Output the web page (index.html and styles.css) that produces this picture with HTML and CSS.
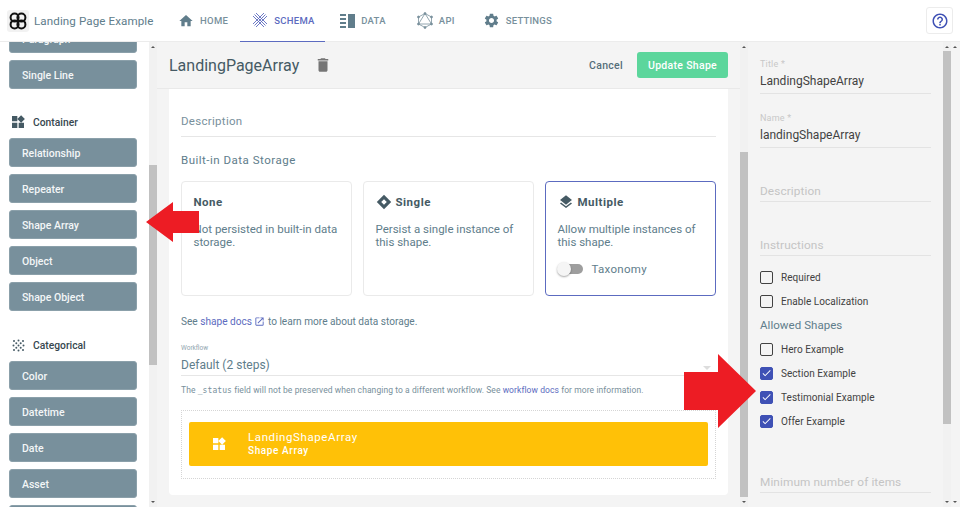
FILE: index.html
```html
<!DOCTYPE html>
<html>
	<head>
		<meta charset="UTF-8">
		<title>Landing Page Example</title>
		<link rel="stylesheet" href="styles.css">
	</head>
	<body>
		<div class="topbar">
			<div class="logo">
				<svg width="18" height="18" viewBox="0 0 18 18" fill="none" stroke="#111" stroke-width="2"><circle cx="5.6" cy="5.6" r="4"/><circle cx="12.4" cy="5.6" r="4"/><circle cx="5.6" cy="12.4" r="4"/><circle cx="12.4" cy="12.4" r="4"/></svg>
			</div>
			<div class="project">Landing Page Example</div>
			<a class="tab tab_home">
				<svg width="16" height="16" viewBox="0 0 24 24" fill="#607d8b"><path d="M10 20v-6h4v6h5v-8h3L12 3 2 12h3v8z"/></svg>
				<span>Home</span>
			</a>
			<a class="tab tab_schema">
				<svg width="16" height="16" viewBox="0 0 16 16" fill="none" stroke="#5c6bc0" stroke-width=".9"><path d="M4 1L15 12M2.500 2.500L13.500 13.500M1 4L12 15M12 1L1 12M13.500 2.500L2.500 13.500M15 4L4 15"/></svg>
				<span>Schema</span>
			</a>
			<a class="tab tab_data">
				<svg width="15" height="15" viewBox="0 0 15 15" fill="#607d8b"><path d="M0 1h6v2H0zM0 5h6v2H0zM0 9h6v2H0zM0 13h6v2H0zM8 1h7v14H8z"/></svg>
				<span>Data</span>
			</a>
			<a class="tab tab_api">
				<svg width="16" height="17" viewBox="0 0 16 17" fill="#78909c" stroke="#78909c" stroke-width=".8"><path fill="none" d="M8 1.500L14.500 5v7L8 15.500 1.500 12V5zM8 1.500L1.500 12h13z"/><circle cx="8" cy="1.500" r="1"/><circle cx="14.500" cy="5" r="1"/><circle cx="14.500" cy="12" r="1"/><circle cx="8" cy="15.500" r="1"/><circle cx="1.500" cy="12" r="1"/><circle cx="1.500" cy="5" r="1"/></svg>
				<span>API</span>
			</a>
			<a class="tab tab_settings">
				<svg width="17" height="17" viewBox="0 0 24 24" fill="#607d8b"><path d="M19.140 12.940c.04-.3.060-.61.060-.94 0-.32-.02-.64-.07-.94l2.030-1.580c.18-.14.230-.41.120-.61l-1.920-3.320c-.12-.22-.37-.29-.59-.22l-2.390.96c-.5-.38-1.030-.7-1.620-.94l-.36-2.540c-.04-.24-.24-.41-.48-.41h-3.840c-.24 0-.43.170-.47.410l-.36 2.540c-.59.240-1.130.570-1.620.94l-2.390-.96c-.22-.08-.47 0-.59.220L2.740 8.870c-.12.210-.08.470.12.610l2.030 1.580c-.05.300-.09.630-.09.940s.02.640.07.940l-2.030 1.580c-.18.140-.23.410-.12.610l1.920 3.320c.12.220.37.290.59.220l2.390-.96c.5.380 1.030.7 1.620.94l.36 2.540c.05.240.24.410.48.410h3.840c.24 0 .44-.17.47-.41l.36-2.540c.59-.24 1.130-.56 1.620-.94l2.390.96c.22.080.47 0 .59-.22l1.920-3.320c.12-.22.070-.47-.12-.61l-2.010-1.580zM12 15.600c-1.980 0-3.600-1.620-3.600-3.600s1.620-3.600 3.600-3.600 3.600 1.620 3.600 3.600-1.620 3.600-3.600 3.600z"/></svg>
				<span>Settings</span>
			</a>
			<div class="help">
				<svg width="18" height="18" viewBox="0 0 24 24" fill="#3f51b5"><path d="M11 18h2v-2h-2v2zm1-16C6.480 2 2 6.480 2 12s4.480 10 10 10 10-4.480 10-10S17.520 2 12 2zm0 18c-4.410 0-8-3.590-8-8s3.590-8 8-8 8 3.590 8 8-3.590 8-8 8zm0-14c-2.210 0-4 1.790-4 4h2c0-1.100.9-2 2-2s2 .9 2 2c0 2-3 1.750-3 5h2c0-2.250 3-2.500 3-5 0-2.210-1.790-4-4-4z"/></svg>
			</div>
		</div>

		<div class="workspace">
			<div class="palette">
				<div class="palette_inner">
					<div class="block">Paragraph</div>
					<div class="block">Single Line</div>
					<div class="group_head group_container">
						<svg width="16" height="16" viewBox="0 0 24 24" fill="#455a64"><path d="M13 13v8h8v-8h-8zM3 21h8v-8H3v8zM3 3v8h8V3H3zm13.660-1.310L11 7.340 16.660 13l5.660-5.660-5.660-5.650z"/></svg>
						<span>Container</span>
					</div>
					<div class="block">Relationship</div>
					<div class="block">Repeater</div>
					<div class="block">Shape Array</div>
					<div class="block">Object</div>
					<div class="block">Shape Object</div>
					<div class="group_head group_categorical">
						<svg width="13" height="13" viewBox="0 0 13 13" fill="#455a64"><circle cx="2" cy="2" r="1"/><circle cx="6.500" cy="1.500" r="1"/><circle cx="11" cy="2" r="1"/><circle cx="4.300" cy="4.300" r="1"/><circle cx="8.700" cy="4.300" r="1"/><circle cx="1.500" cy="6.500" r="1"/><circle cx="6.500" cy="6.500" r="1"/><circle cx="11.500" cy="6.500" r="1"/><circle cx="4.300" cy="8.700" r="1"/><circle cx="8.700" cy="8.700" r="1"/><circle cx="2" cy="11" r="1"/><circle cx="6.500" cy="11.500" r="1"/><circle cx="11" cy="11" r="1"/></svg>
						<span>Categorical</span>
					</div>
					<div class="block">Color</div>
					<div class="block">Datetime</div>
					<div class="block">Date</div>
					<div class="block">Asset</div>
					<div class="block"></div>
				</div>
			</div>
			<div class="bar"><div class="thumb thumb_palette"></div></div>

			<div class="editor">
				<div class="editor_head">
					<div class="shape_title">LandingPageArray</div>
					<svg class="trash" width="18" height="18" viewBox="0 0 24 24" fill="#757575"><path d="M6 19c0 1.100.9 2 2 2h8c1.100 0 2-.9 2-2V7H6v12zM19 4h-3.500l-1-1h-5l-1 1H5v2h14V4z"/></svg>
					<div class="cancel">Cancel</div>
					<div class="update">Update Shape</div>
				</div>
				<div class="sheet">
					<div class="desc_field">Description</div>
					<div class="storage_title">Built-in Data Storage</div>
					<div class="storage">
						<div class="option">
							<div class="option_head">None</div>
							<p>Not persisted in built-in data storage.</p>
						</div>
						<div class="option">
							<div class="option_head">
								<svg width="16" height="16" viewBox="0 0 16 16" fill="#455a64"><path fill-rule="evenodd" d="M8 .8L15.200 8 8 15.200 .8 8zM8 5.200L5.200 8 8 10.800 10.800 8z"/></svg>
								<span>Single</span>
							</div>
							<p>Persist a single instance of this shape.</p>
						</div>
						<div class="option option_on">
							<div class="option_head">
								<svg width="16" height="16" viewBox="0 0 24 24" fill="#455a64"><path d="M11.990 18.540l-7.370-5.730L3 14.070l9 7 9-7-1.630-1.270-7.380 5.740zM12 16l7.360-5.730L21 9l-9-7-9 7 1.630 1.270L12 16z"/></svg>
								<span>Multiple</span>
							</div>
							<p>Allow multiple instances of this shape.</p>
							<div class="taxonomy">
								<div class="switch"><div class="knob"></div></div>
								<span>Taxonomy</span>
							</div>
						</div>
					</div>
					<div class="docs">See <a>shape docs <svg width="11" height="11" viewBox="0 0 24 24" fill="#5c6bc0"><path d="M19 19H5V5h7V3H5c-1.110 0-2 .9-2 2v14c0 1.100.89 2 2 2h14c1.100 0 2-.9 2-2v-7h-2v7zM14 3v2h3.590l-9.830 9.830 1.410 1.410L19 6.410V10h2V3h-7z"/></svg></a> to learn more about data storage.</div>
					<div class="wf_label">Workflow</div>
					<div class="wf_select">Default (2 steps)<i class="caret"></i></div>
					<div class="wf_note">The <code>_status</code> field will not be preserved when changing to a different workflow. See <a>workflow docs</a> for more information.</div>
					<div class="dropzone">
						<div class="shape_item">
							<svg width="16" height="16" viewBox="0 0 24 24" fill="#fff"><path d="M13 13v8h8v-8h-8zM3 21h8v-8H3v8zM3 3v8h8V3H3zm13.660-1.310L11 7.340 16.660 13l5.660-5.660-5.660-5.650z"/></svg>
							<div class="shape_text">
								<div class="shape_name">LandingShapeArray</div>
								<div class="shape_type">Shape Array</div>
							</div>
						</div>
					</div>
				</div>
			</div>
			<div class="bar"><div class="thumb thumb_editor"></div></div>

			<div class="props">
				<div class="field field_title"><label>Title *</label><div>LandingShapeArray</div></div>
				<div class="field field_name"><label>Name *</label><div>landingShapeArray</div></div>
				<div class="field_empty field_desc">Description</div>
				<div class="field_empty field_instr">Instructions</div>
				<div class="check check_first"><i class="box"></i>Required</div>
				<div class="check"><i class="box"></i>Enable Localization</div>
				<div class="allowed">Allowed Shapes</div>
				<div class="check"><i class="box"></i>Hero Example</div>
				<div class="check"><i class="box box_on"><svg width="12" height="12" viewBox="0 0 24 24" fill="#fff"><path d="M9 16.170L4.830 12l-1.420 1.410L9 19 21 7l-1.410-1.410z"/></svg></i>Section Example</div>
				<div class="check"><i class="box box_on"><svg width="12" height="12" viewBox="0 0 24 24" fill="#fff"><path d="M9 16.170L4.830 12l-1.420 1.410L9 19 21 7l-1.410-1.410z"/></svg></i>Testimonial Example</div>
				<div class="check"><i class="box box_on"><svg width="12" height="12" viewBox="0 0 24 24" fill="#fff"><path d="M9 16.170L4.830 12l-1.420 1.410L9 19 21 7l-1.410-1.410z"/></svg></i>Offer Example</div>
				<div class="field_empty field_min">Minimum number of items</div>
			</div>
			<div class="bar"><div class="thumb thumb_props"></div></div>
			<div class="bar bar_outer"></div>
		</div>

		<svg class="arrow arrow_left" width="54" height="40" viewBox="0 0 54 40"><path d="M0 20L27 0V9H53V31H27V40z"/></svg>
		<svg class="arrow arrow_right" width="73" height="74" viewBox="0 0 73 74"><path d="M0 18H34V0L72 37 34 74V56H0z"/></svg>
	</body>
</html>
```

FILE: styles.css
```css
* {
	margin: 0;
	padding: 0;
	box-sizing: border-box;
}
body {
	width: 960px;
	height: 507px;
	overflow: hidden;
	position: relative;
	background: #fff;
	font-family: Roboto, sans-serif;
	color: #455a64;
}
a {
	color: #5c6bc0;
}

/* top bar */
.topbar {
	height: 42px;
	display: flex;
	align-items: center;
	background: #fff;
	border-bottom: 1px solid #ececec;
}
.logo {
	width: 22px;
	height: 22px;
	margin-left: 7px;
	display: flex;
	align-items: center;
	justify-content: center;
	background: #f2f2f2;
	border-radius: 3px;
}
.project {
	margin-left: 5px;
	width: 145px;
	font-size: 11.6px;
	letter-spacing: .1px;
	color: #607d8b;
}
.tab {
	height: 42px;
	display: flex;
	align-items: center;
	gap: 6px;
	font-size: 9.5px;
	font-weight: 500;
	letter-spacing: .3px;
	text-transform: uppercase;
	color: #78909c;
}
.tab_home {
	margin-left: -1px;
}
.tab_schema {
	width: 85px;
	margin-left: 12px;
	padding-left: 12px;
	color: #5c6bc0;
	border-bottom: 1px solid #5c6bc0;
}
.tab_data {
	margin-left: 15px;
}
.tab_api {
	margin-left: 31px;
}
.tab_settings {
	margin-left: 28px;
	letter-spacing: .2px;
}
.help {
	width: 27px;
	height: 27px;
	margin-left: auto;
	margin-right: 7px;
	display: flex;
	align-items: center;
	justify-content: center;
	border: 1px solid #ececec;
	border-radius: 3px;
}

/* main row */
.workspace {
	height: 465px;
	display: flex;
}
.bar {
	width: 8px;
	flex-shrink: 0;
	position: relative;
	background: #f1f1f1;
}
.bar::before,
.bar::after {
	content: "";
	position: absolute;
	left: 2px;
	border-left: 2px solid transparent;
	border-right: 2px solid transparent;
}
.bar::before {
	top: 4px;
	border-bottom: 2px solid #555;
}
.bar::after {
	bottom: 4px;
	border-top: 2px solid #555;
}
.thumb {
	width: 8px;
	background: #c1c1c1;
}
.thumb_palette {
	margin-top: 123px;
	height: 200px;
}
.thumb_editor {
	margin-top: 110px;
	height: 345px;
}
.thumb_props {
	margin-top: 9px;
	height: 373px;
}
.bar_outer {
	width: 9px;
	background: #f4f4f4;
}

/* left palette */
.palette {
	width: 149px;
	flex-shrink: 0;
	overflow: hidden;
	background: #fff;
}
.palette_inner {
	margin-top: -18px;
	padding: 0 12px 0 9px;
}
.block {
	height: 29px;
	margin-bottom: 7px;
	padding: 1px 0 0 12px;
	display: flex;
	align-items: center;
	font-size: 10.5px;
	font-weight: 500;
	color: #f3f6f7;
	background: #78909c;
	border: 1px solid #8ba0aa;
	border-radius: 3px;
}
.group_head {
	height: 16px;
	display: flex;
	align-items: center;
	margin-bottom: 8px;
	font-size: 10.3px;
	font-weight: 500;
	color: #37474f;
}
.group_container {
	margin-top: 25px;
	margin-left: 1px;
	gap: 7px;
}
.group_categorical {
	margin-top: 26px;
	margin-left: 3px;
	gap: 8px;
}

/* middle editor */
.editor {
	width: 583px;
	flex-shrink: 0;
	background: #f4f4f4;
}
.editor_head {
	height: 47px;
	padding: 0 12px;
	display: flex;
	align-items: center;
	border-bottom: 1px solid #e9e9e9;
}
.shape_title {
	font-size: 16px;
	color: #455a64;
}
.trash {
	margin-left: 15px;
}
.cancel {
	margin-left: auto;
	font-size: 10.5px;
	font-weight: 500;
	letter-spacing: .3px;
	color: #546e7a;
}
.update {
	width: 91px;
	height: 26px;
	margin-left: 14px;
	display: flex;
	align-items: center;
	justify-content: center;
	font-size: 10.5px;
	font-weight: 500;
	letter-spacing: .3px;
	color: #fff;
	background: #5cd69c;
	border-radius: 3px;
}
.sheet {
	height: 406px;
	margin: 0 12px;
	padding: 0 12px;
	background: #fff;
	border-radius: 0 0 4px 4px;
}
.desc_field {
	height: 48px;
	padding-top: 25px;
	font-size: 11.5px;
	letter-spacing: .3px;
	color: #78909c;
	border-bottom: 1px solid #e6e6e6;
}
.storage_title {
	margin-top: 16px;
	font-size: 11.5px;
	letter-spacing: .5px;
	color: #607d8b;
}
.storage {
	margin-top: 14px;
	display: flex;
	gap: 11px;
}
.option {
	width: 171px;
	height: 115px;
	padding: 12px 11.5px;
	border: 1px solid #eaeaea;
	border-radius: 4px;
}
.option_on {
	border-color: #5c6bc0;
}
.option_head {
	height: 16px;
	display: flex;
	align-items: center;
	gap: 4px;
	font-size: 11.5px;
	font-weight: 700;
	letter-spacing: .5px;
	color: #455a64;
}
.option p {
	margin-top: 13px;
	font-size: 11.5px;
	line-height: 13px;
	color: #607d8b;
}
.taxonomy {
	margin-top: 13px;
	display: flex;
	align-items: center;
	gap: 9px;
	font-size: 11.500px;
	letter-spacing: .3px;
	color: #607d8b;
}
.switch {
	width: 25px;
	height: 10px;
	border-radius: 5px;
	background: #9e9e9e;
	position: relative;
}
.knob {
	position: absolute;
	left: -1px;
	top: -2px;
	width: 14px;
	height: 14px;
	border-radius: 50%;
	background: #f5f5f5;
	box-shadow: 0 1px 2px rgba(0,0,0,.35);
}
.docs {
	margin-top: 20px;
	font-size: 10.1px;
	color: #607d8b;
}
.docs svg {
	vertical-align: -2px;
}
.wf_label {
	margin-top: 17px;
	font-size: 6.5px;
	color: #90a4ae;
}
.wf_select {
	height: 24px;
	padding-top: 6px;
	font-size: 12px;
	color: #607d8b;
	border-bottom: 1px solid #e6e6e6;
	position: relative;
}
.caret {
	position: absolute;
	right: 5px;
	top: 14px;
	border-left: 4px solid transparent;
	border-right: 4px solid transparent;
	border-top: 4px solid #ddd;
}
.wf_note {
	margin-top: 9px;
	font-size: 8.5px;
	letter-spacing: .08px;
	color: #78909c;
}
.wf_note code {
	font-family: "DejaVu Sans Mono", monospace;
	font-size: 8px;
}
.dropzone {
	height: 69px;
	margin-top: 15px;
	padding: 11px 7px;
	border: 1px dotted #d5d5d5;
}
.shape_item {
	height: 44px;
	padding-left: 22px;
	display: flex;
	align-items: center;
	gap: 21px;
	color: #fff;
	background: #ffc107;
	border-radius: 2px;
}
.shape_name {
	font-size: 11.5px;
	letter-spacing: .6px;
	line-height: 14px;
}
.shape_type {
	font-size: 10px;
	font-weight: 500;
	letter-spacing: .6px;
	line-height: 14px;
}

/* right properties */
.props {
	flex: 1;
	padding: 17px 12px 0;
	background: #f4f4f4;
	color: #424242;
}
.field label {
	display: block;
	height: 11px;
	font-size: 9px;
	line-height: 11px;
	letter-spacing: .2px;
	color: #c8c8c8;
}
.field div {
	height: 24px;
	padding-top: 4px;
	font-size: 12px;
	border-bottom: 1px solid #e3e3e3;
}
.field_name {
	margin-top: 19px;
}
.field_empty {
	height: 17px;
	font-size: 11.8px;
	line-height: 12px;
	letter-spacing: .1px;
	color: #c4c4c4;
	border-bottom: 1px solid #e3e3e3;
}
.field_desc {
	margin-top: 37px;
}
.field_instr {
	margin-top: 37px;
}
.check {
	height: 24px;
	display: flex;
	align-items: center;
	gap: 8px;
	font-size: 10px;
	letter-spacing: .05px;
}
.check_first {
	margin-top: 9px;
}
.box {
	width: 13px;
	height: 13px;
	display: flex;
	align-items: center;
	justify-content: center;
	border: 1.500px solid #424242;
	border-radius: 2px;
}
.box_on {
	background: #3f51b5;
	border-color: #3f51b5;
}
.allowed {
	height: 24px;
	line-height: 24px;
	font-size: 11.500px;
	letter-spacing: .05px;
	color: #607d8b;
}
.field_min {
	margin-top: 43px;
}

/* red arrows drawn on top of the shot */
.arrow {
	position: absolute;
}
.arrow path {
	fill: #ed1c24;
}
.arrow_left {
	left: 146px;
	top: 202px;
}
.arrow_right {
	left: 684px;
	top: 354px;
}
```
